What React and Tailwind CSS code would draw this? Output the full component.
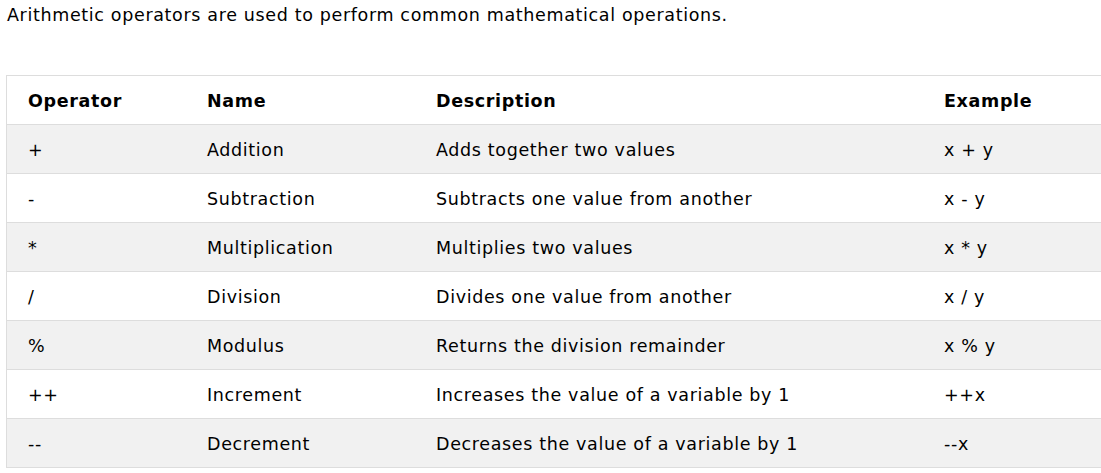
const rows = [
  ["+", "Addition", "Adds together two values", "x + y"],
  ["-", "Subtraction", "Subtracts one value from another", "x - y"],
  ["*", "Multiplication", "Multiplies two values", "x * y"],
  ["/", "Division", "Divides one value from another", "x / y"],
  ["%", "Modulus", "Returns the division remainder", "x % y"],
  ["++", "Increment", "Increases the value of a variable by 1", "++x"],
  ["--", "Decrement", "Decreases the value of a variable by 1", "--x"],
];

function Row({ cells, head, striped }) {
  return (
    <div
      className={`grid grid-cols-[179px_229px_508px_1fr] h-[49px] items-center border-b border-[#dddddd] ${
        striped ? "bg-[#f1f1f1]" : "bg-white"
      } ${head ? "font-bold" : ""}`}
    >
      {cells.map((c, i) => (
        <div key={i} className="pl-[21px] pt-[2px] whitespace-pre">
          {c}
        </div>
      ))}
    </div>
  );
}

export default function App() {
  return (
    <div className="bg-white w-[1101px] h-[473px] overflow-hidden text-[17.5px] tracking-[0.65px] text-black font-['DejaVu_Sans',sans-serif]">
      <p className="pl-[7px] pt-[4px] leading-[22px]">
        Arithmetic operators are used to perform common mathematical operations.
      </p>
      <div className="mt-[49px] ml-[6px] w-[1110px] border-t border-l border-[#dddddd]">
        <Row head cells={["Operator", "Name", "Description", "Example"]} />
        {rows.map((r, i) => (
          <Row key={i} cells={r} striped={i % 2 === 0} />
        ))}
      </div>
    </div>
  );
}
